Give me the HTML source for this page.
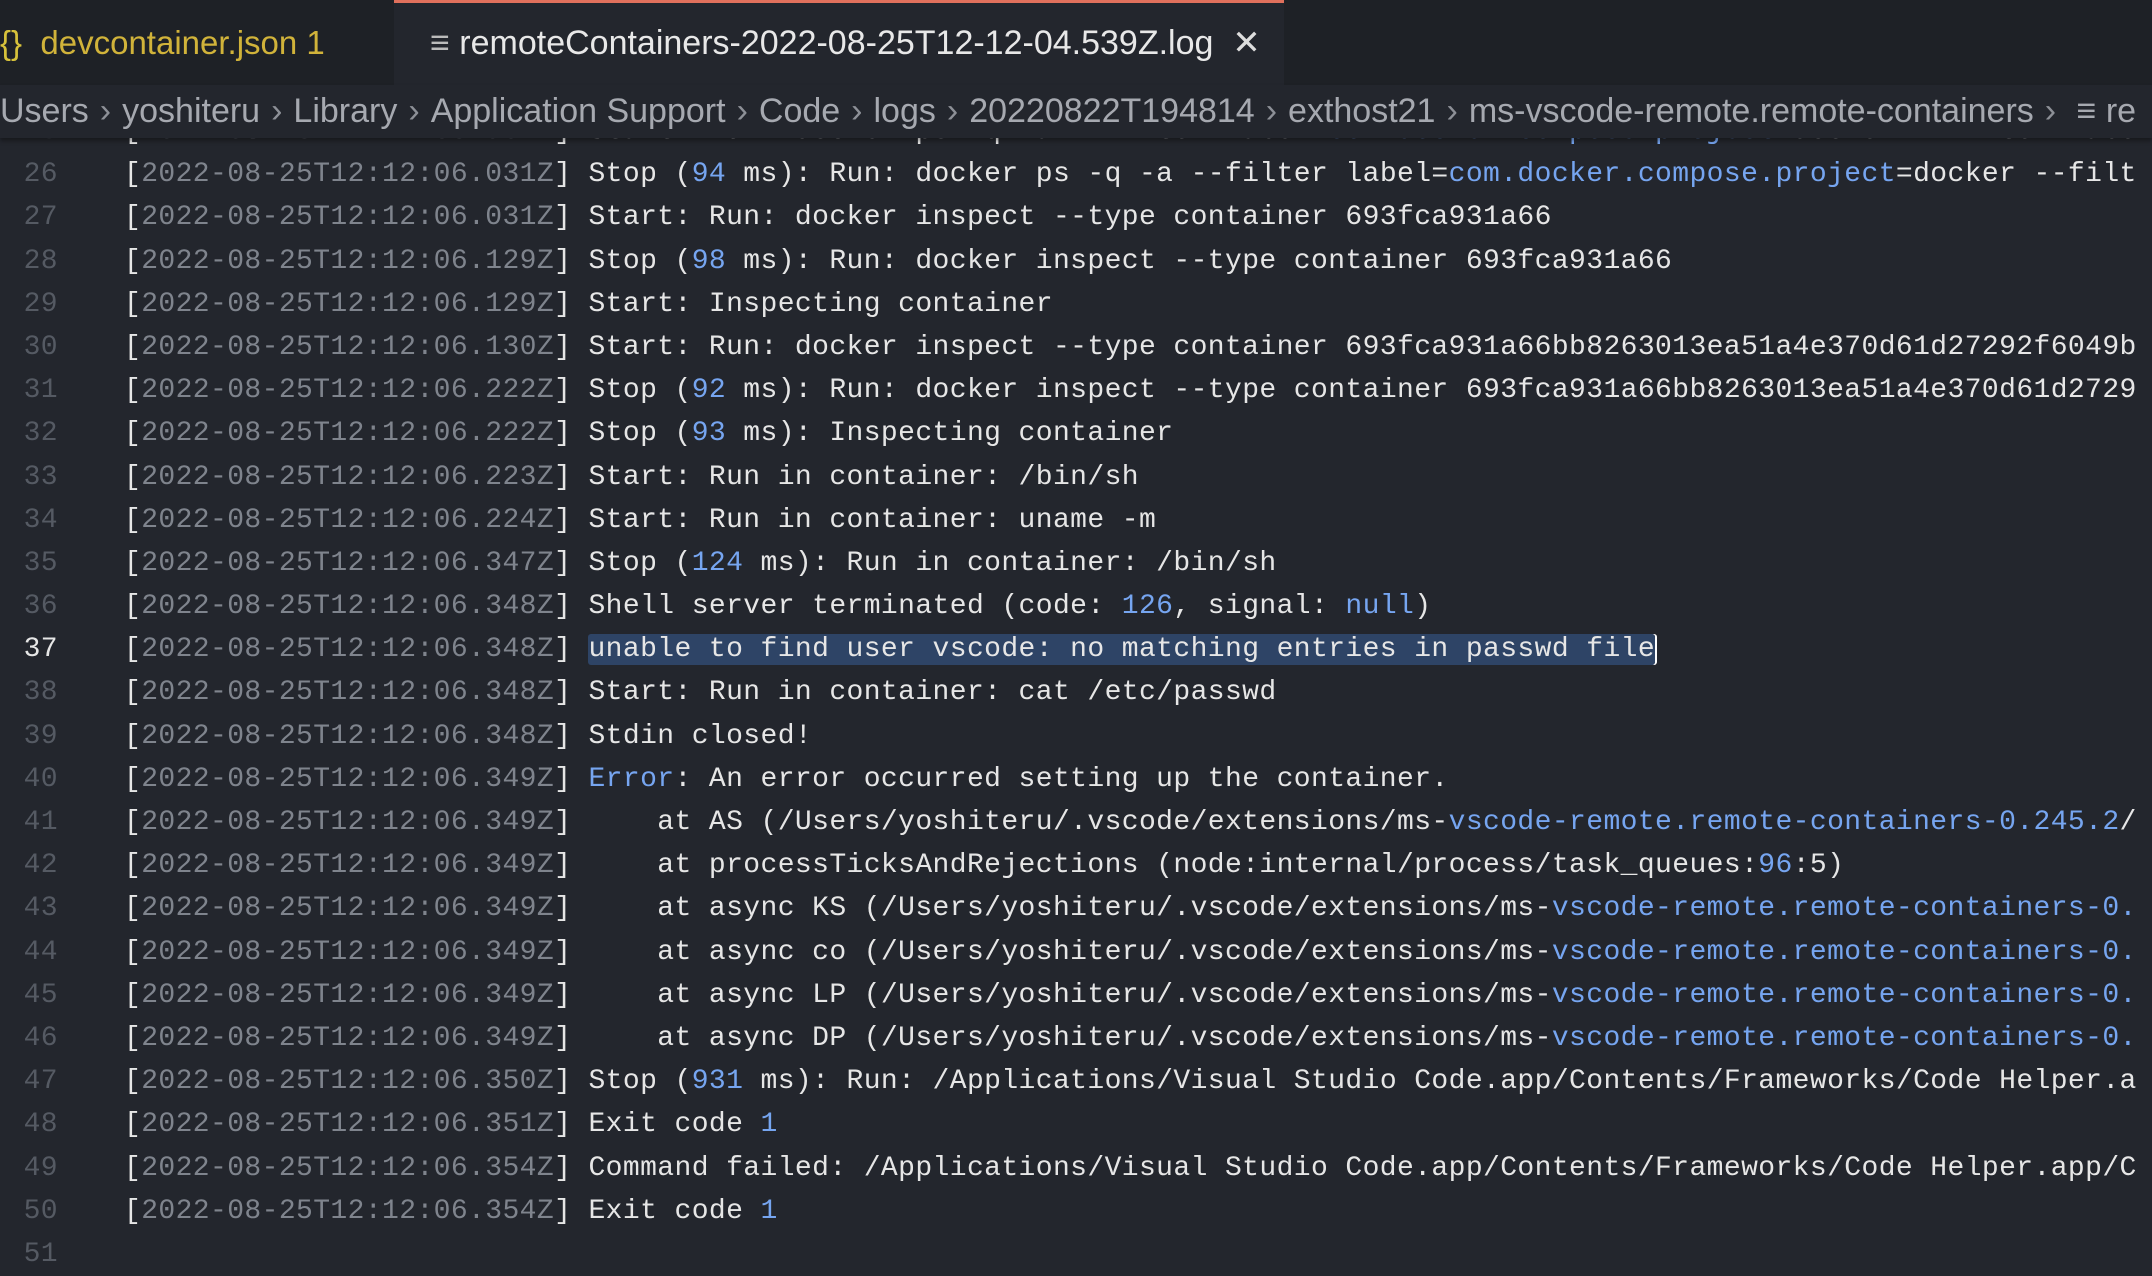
<!DOCTYPE html>
<html><head><meta charset="utf-8"><style>
html,body{margin:0;padding:0;width:2152px;height:1270px;overflow:hidden;background:#23262d;}
.tabs{position:absolute;left:0;top:0;width:2152px;height:85px;background:#1e2126;}
.tab{position:absolute;top:0;height:85px;font:33px "Liberation Sans",sans-serif;line-height:85px;white-space:pre;}
.t1{left:0;width:392px;color:#d1b33a;}
.t2{left:394px;width:890px;background:#23262d;color:#e8e8e8;border-top:3px solid #e0705c;box-sizing:border-box;line-height:80px;font-size:34px;padding-left:36px;}
.crumb{position:absolute;left:0;top:85px;width:2152px;height:53px;background:#23262d;font:34px "Liberation Sans",sans-serif;color:#a6a9b0;line-height:52px;white-space:pre;z-index:2;box-shadow:0 3px 4px rgba(0,0,0,.35);}
.ch{color:#8d9097;display:inline-block;margin:0 11px;}
.code{position:absolute;left:0;top:110px;font:28px "Liberation Mono",monospace;letter-spacing:0.4px;color:#e6e6e6;}
.l{height:43.2px;line-height:43.2px;position:relative;white-space:pre;}
.n{display:inline-block;width:58px;text-align:right;color:#555a63;}
.c .n{color:#e6e6e6}
.ts{color:#7f848d}
.b{color:#76a5f0}
.hl{background:#2e4466;border-radius:3px;box-shadow:2px 0 0 #fff;}
.g{display:inline-block;width:66px;}
</style></head><body>
<div class="tabs">
<div class="tab t1"><span style="color:#d7c23b">{}</span>  devcontainer.json 1</div>
<div class="tab t2"><span style="color:#bbb">≡</span> remoteContainers-2022-08-25T12-12-04.539Z.log  <span style="color:#ddd">✕</span></div>
</div>
<div class="crumb">Users<span class="ch">›</span>yoshiteru<span class="ch">›</span>Library<span class="ch">›</span>Application Support<span class="ch">›</span>Code<span class="ch">›</span>logs<span class="ch">›</span>20220822T194814<span class="ch">›</span>exthost21<span class="ch">›</span>ms-vscode-remote.remote-containers<span class="ch">›</span> ≡ re</div>
<div class="code"><div class="l"><span class="n">25</span><span class="g"></span>[<span class="ts">2022-08-25T12:12:05.937Z</span>] Start: Run: docker ps -q -a --filter label=<span class="b">com.docker.compose.project</span>=docker --filter label</div><div class="l"><span class="n">26</span><span class="g"></span>[<span class="ts">2022-08-25T12:12:06.031Z</span>] Stop (<span class="b">94</span> ms): Run: docker ps -q -a --filter label=<span class="b">com.docker.compose.project</span>=docker --filt</div><div class="l"><span class="n">27</span><span class="g"></span>[<span class="ts">2022-08-25T12:12:06.031Z</span>] Start: Run: docker inspect --type container 693fca931a66</div><div class="l"><span class="n">28</span><span class="g"></span>[<span class="ts">2022-08-25T12:12:06.129Z</span>] Stop (<span class="b">98</span> ms): Run: docker inspect --type container 693fca931a66</div><div class="l"><span class="n">29</span><span class="g"></span>[<span class="ts">2022-08-25T12:12:06.129Z</span>] Start: Inspecting container</div><div class="l"><span class="n">30</span><span class="g"></span>[<span class="ts">2022-08-25T12:12:06.130Z</span>] Start: Run: docker inspect --type container 693fca931a66bb8263013ea51a4e370d61d27292f6049b</div><div class="l"><span class="n">31</span><span class="g"></span>[<span class="ts">2022-08-25T12:12:06.222Z</span>] Stop (<span class="b">92</span> ms): Run: docker inspect --type container 693fca931a66bb8263013ea51a4e370d61d2729</div><div class="l"><span class="n">32</span><span class="g"></span>[<span class="ts">2022-08-25T12:12:06.222Z</span>] Stop (<span class="b">93</span> ms): Inspecting container</div><div class="l"><span class="n">33</span><span class="g"></span>[<span class="ts">2022-08-25T12:12:06.223Z</span>] Start: Run in container: /bin/sh</div><div class="l"><span class="n">34</span><span class="g"></span>[<span class="ts">2022-08-25T12:12:06.224Z</span>] Start: Run in container: uname -m</div><div class="l"><span class="n">35</span><span class="g"></span>[<span class="ts">2022-08-25T12:12:06.347Z</span>] Stop (<span class="b">124</span> ms): Run in container: /bin/sh</div><div class="l"><span class="n">36</span><span class="g"></span>[<span class="ts">2022-08-25T12:12:06.348Z</span>] Shell server terminated (code: <span class="b">126</span>, signal: <span class="b">null</span>)</div><div class="l c"><span class="n">37</span><span class="g"></span>[<span class="ts">2022-08-25T12:12:06.348Z</span>] <span class="hl">unable to find user vscode: no matching entries in passwd file</span></div><div class="l"><span class="n">38</span><span class="g"></span>[<span class="ts">2022-08-25T12:12:06.348Z</span>] Start: Run in container: cat /etc/passwd</div><div class="l"><span class="n">39</span><span class="g"></span>[<span class="ts">2022-08-25T12:12:06.348Z</span>] Stdin closed!</div><div class="l"><span class="n">40</span><span class="g"></span>[<span class="ts">2022-08-25T12:12:06.349Z</span>] <span class="b">Error</span>: An error occurred setting up the container.</div><div class="l"><span class="n">41</span><span class="g"></span>[<span class="ts">2022-08-25T12:12:06.349Z</span>]     at AS (/Users/yoshiteru/.vscode/extensions/ms-<span class="b">vscode-remote.remote-containers-0.245.2</span>/</div><div class="l"><span class="n">42</span><span class="g"></span>[<span class="ts">2022-08-25T12:12:06.349Z</span>]     at processTicksAndRejections (node:internal/process/task_queues:<span class="b">96</span>:5)</div><div class="l"><span class="n">43</span><span class="g"></span>[<span class="ts">2022-08-25T12:12:06.349Z</span>]     at async KS (/Users/yoshiteru/.vscode/extensions/ms-<span class="b">vscode-remote.remote-containers-0.</span></div><div class="l"><span class="n">44</span><span class="g"></span>[<span class="ts">2022-08-25T12:12:06.349Z</span>]     at async co (/Users/yoshiteru/.vscode/extensions/ms-<span class="b">vscode-remote.remote-containers-0.</span></div><div class="l"><span class="n">45</span><span class="g"></span>[<span class="ts">2022-08-25T12:12:06.349Z</span>]     at async LP (/Users/yoshiteru/.vscode/extensions/ms-<span class="b">vscode-remote.remote-containers-0.</span></div><div class="l"><span class="n">46</span><span class="g"></span>[<span class="ts">2022-08-25T12:12:06.349Z</span>]     at async DP (/Users/yoshiteru/.vscode/extensions/ms-<span class="b">vscode-remote.remote-containers-0.</span></div><div class="l"><span class="n">47</span><span class="g"></span>[<span class="ts">2022-08-25T12:12:06.350Z</span>] Stop (<span class="b">931</span> ms): Run: /Applications/Visual Studio Code.app/Contents/Frameworks/Code Helper.a</div><div class="l"><span class="n">48</span><span class="g"></span>[<span class="ts">2022-08-25T12:12:06.351Z</span>] Exit code <span class="b">1</span></div><div class="l"><span class="n">49</span><span class="g"></span>[<span class="ts">2022-08-25T12:12:06.354Z</span>] Command failed: /Applications/Visual Studio Code.app/Contents/Frameworks/Code Helper.app/C</div><div class="l"><span class="n">50</span><span class="g"></span>[<span class="ts">2022-08-25T12:12:06.354Z</span>] Exit code <span class="b">1</span></div><div class="l"><span class="n">51</span></div></div>
</body></html>
